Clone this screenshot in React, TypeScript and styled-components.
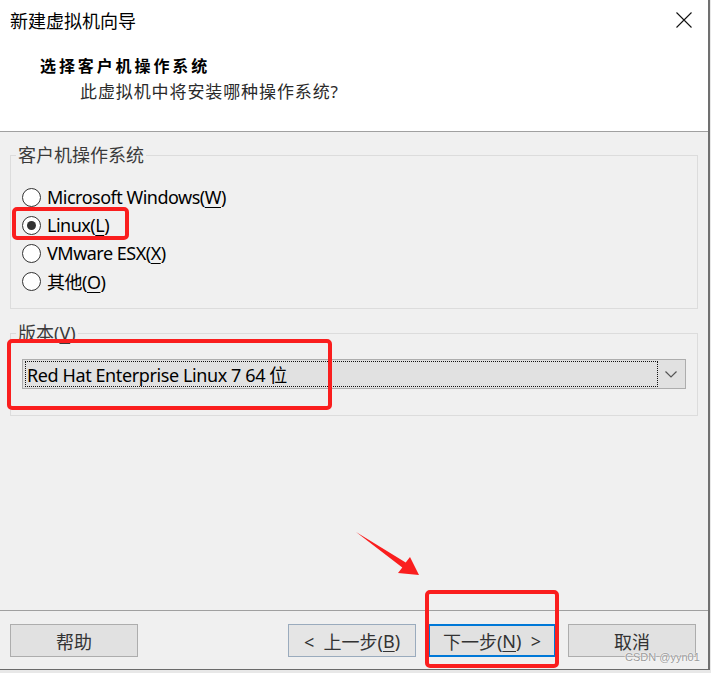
import React from 'react';
import styled, { createGlobalStyle } from 'styled-components';

const GlobalStyle = createGlobalStyle`
  html, body {
    margin: 0;
    padding: 0;
    background: #e8e8e8;
  }
  body {
    font-family: "Noto Sans", "Noto Sans CJK SC", sans-serif;
  }
`;

const Screen = styled.div`
  position: relative;
  width: 711px;
  height: 673px;
  overflow: hidden;
  background: #e8e8e8;
`;

// dialog window
const Window = styled.div`
  width: 708px;
  height: 669px;
  display: flex;
  flex-direction: column;
  background: #f0f0f0;
  border-right: 2px solid #707070;
  border-bottom: 1px solid #6a6a6a;
`;

// white header
const Header = styled.div`
  height: 131px;
  flex-shrink: 0;
  background: #fff;
  border-bottom: 1px solid #a0a0a0;
  display: flex;
  flex-direction: column;
`;

const TitleBar = styled.div`
  height: 40px;
  display: flex;
  align-items: center;
  justify-content: space-between;
  padding: 0 16px 0 10px;
  font-size: 18px;
  color: #000;
`;

const Heading = styled.div`
  margin: 14px 0 0 40px;
  font-size: 16px;
  line-height: 24px;
  font-weight: bold;
  letter-spacing: 2.9px;
  color: #000;
`;

const SubHeading = styled.div`
  margin: 2px 0 0 80px;
  font-size: 17px;
  line-height: 24px;
  letter-spacing: 0.9px;
  color: #2a2a2a;
`;

// gray body
const Body = styled.div`
  flex: 1;
  padding: 0 10px;
`;

const Group = styled.fieldset<{ $top: number }>`
  margin: ${p => p.$top}px 0 0;
  padding: 0 5px;
  border: 1px solid #dcdcdc;
  min-width: 0;
`;

const Legend = styled.legend`
  padding: 0 2px;
  font-size: 18px;
  line-height: 24px;
  color: #3a3a3a;
`;

const RadioList = styled.div`
  display: flex;
  flex-direction: column;
  padding: 16px 0 13px 6px;
`;

const RadioRow = styled.label`
  height: 28px;
  display: flex;
  align-items: center;
  gap: 6px;
  font-size: 18px;
  letter-spacing: -0.5px;
  color: #000;
`;

const RadioCircle = styled.span<{ $checked?: boolean }>`
  width: 19px;
  height: 19px;
  box-sizing: border-box;
  border: 1px solid #333;
  border-radius: 50%;
  background: #fff;
  display: flex;
  align-items: center;
  justify-content: center;

  &::after {
    content: '';
    width: 9px;
    height: 9px;
    border-radius: 50%;
    background: #333;
    display: ${p => (p.$checked ? 'block' : 'none')};
  }
`;

const Key = styled.span`
  text-decoration: underline;
  text-underline-offset: 3px;
`;

const ComboWrap = styled.div`
  padding: 14px 6px 26px;
`;

const Combo = styled.div`
  height: 30px;
  box-sizing: border-box;
  display: flex;
  align-items: stretch;
  background: #e1e1e1;
  border: 1px solid #adadad;
`;

const ComboText = styled.div`
  flex: 1;
  margin: 2px 0 2px 3px;
  display: flex;
  align-items: center;
  padding-left: 1px;
  outline: 1px dotted #111;
  font-size: 18px;
  letter-spacing: -0.4px;
  color: #000;
  white-space: nowrap;
`;

const ComboArrow = styled.div`
  width: 28px;
  display: flex;
  align-items: center;
  justify-content: center;
`;

// footer with buttons
const Footer = styled.div`
  height: 59px;
  flex-shrink: 0;
  box-sizing: border-box;
  border-top: 1px solid #a0a0a0;
  display: flex;
  align-items: flex-start;
  padding: 13px 12px 0 10px;
`;

const NavGroup = styled.div`
  margin-left: auto;
  display: flex;
  gap: 12px;
`;

const Button = styled.button<{ $variant?: 'plain' | 'hover' | 'default' }>`
  width: 128px;
  height: 33px;
  box-sizing: border-box;
  margin: 0;
  padding: 0;
  font-family: inherit;
  font-size: 18px;
  color: #333;
  background: ${p => (p.$variant === 'hover' ? '#e5e5e5' : '#e1e1e1')};
  border: ${p =>
    p.$variant === 'default'
      ? '2px solid #0078d7'
      : p.$variant === 'hover'
      ? '1px solid #9aabbd'
      : '1px solid #adadad'};
  display: flex;
  align-items: center;
  justify-content: center;
  white-space: pre;
`;

// annotations drawn over the screenshot
const RedBox = styled.div`
  position: absolute;
  box-sizing: border-box;
  border: 4px solid #fa1e1e;
  border-radius: 5px;
`;

const ArrowMark = styled.svg`
  position: absolute;
  left: 350px;
  top: 525px;
`;

const Watermark = styled.div`
  position: absolute;
  left: 625px;
  top: 651px;
  font-family: "Liberation Sans", Arial, sans-serif;
  font-size: 11px;
  color: #9a9a9a;
  text-shadow: 0 0 2px #fff, 0 0 1px #fff;
`;

function CloseIcon() {
  return (
    <svg width="16" height="16" viewBox="0 0 16 16">
      <path d="M0.5 0.5 L15.5 15.5 M15.5 0.5 L0.5 15.5" stroke="#111" strokeWidth="1.1" fill="none" />
    </svg>
  );
}

function Chevron() {
  return (
    <svg width="12" height="7" viewBox="0 0 12 7">
      <path d="M0.5 0.5 L6 6 L11.5 0.5" stroke="#555" strokeWidth="1.2" fill="none" />
    </svg>
  );
}

const osOptions = [
  { label: 'Microsoft Windows', key: 'W' },
  { label: 'Linux', key: 'L', checked: true },
  { label: 'VMware ESX', key: 'X' },
  { label: '其他', key: 'O' },
];

export default function App() {
  return (
    <>
      <GlobalStyle />
      <Screen>
        <Window>
          <Header>
            <TitleBar>
              <span>新建虚拟机向导</span>
              <CloseIcon />
            </TitleBar>
            <Heading>选择客户机操作系统</Heading>
            <SubHeading>此虚拟机中将安装哪种操作系统?</SubHeading>
          </Header>

          <Body>
            <Group $top={11}>
              <Legend>客户机操作系统</Legend>
              <RadioList>
                {osOptions.map(o => (
                  <RadioRow key={o.key}>
                    <RadioCircle $checked={o.checked} />
                    <span>
                      {o.label}(<Key>{o.key}</Key>)
                    </span>
                  </RadioRow>
                ))}
              </RadioList>
            </Group>

            <Group $top={12}>
              <Legend>
                版本(<Key>V</Key>)
              </Legend>
              <ComboWrap>
                <Combo>
                  <ComboText>Red Hat Enterprise Linux 7 64 位</ComboText>
                  <ComboArrow>
                    <Chevron />
                  </ComboArrow>
                </Combo>
              </ComboWrap>
            </Group>
          </Body>

          <Footer>
            <Button $variant="plain">帮助</Button>
            <NavGroup>
              <Button $variant="hover">
                {'<  上一步('}
                <Key>B</Key>)
              </Button>
              <Button $variant="default">
                下一步(<Key>N</Key>){'  >'}
              </Button>
              <Button $variant="plain">取消</Button>
            </NavGroup>
          </Footer>
        </Window>

        <RedBox style={{ left: 12, top: 207, width: 117, height: 33 }} />
        <RedBox style={{ left: 7, top: 339, width: 325, height: 71 }} />
        <RedBox style={{ left: 425, top: 590, width: 134, height: 78 }} />

        <ArrowMark width="75" height="55" viewBox="0 0 75 55">
          <polygon points="6,7 55.7,37.5 60,32 69,50 48,48 52.3,42.5" fill="#fa1e1e" />
        </ArrowMark>

        <Watermark>CSDN @yyn01</Watermark>
      </Screen>
    </>
  );
}
